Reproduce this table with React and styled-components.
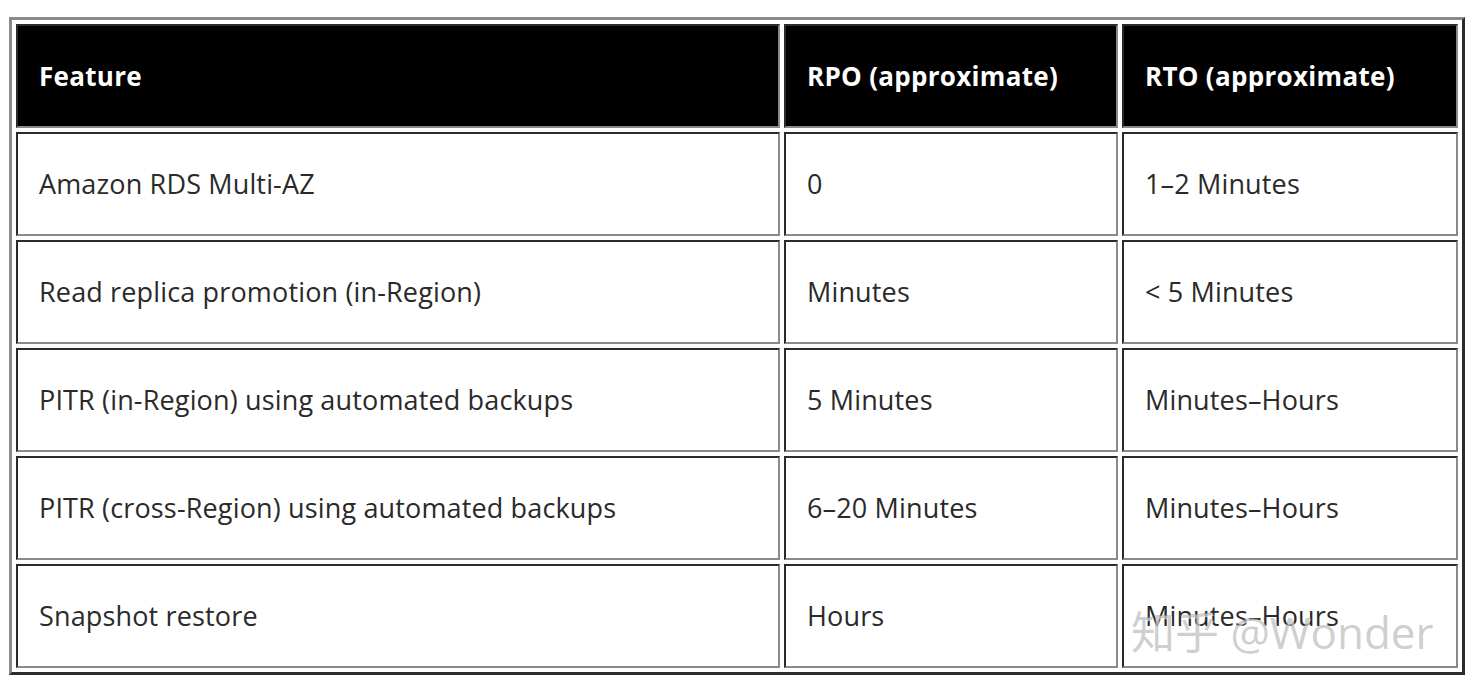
import React from "react";
import styled, { createGlobalStyle } from "styled-components";

const rows = [
  ["Amazon RDS Multi-AZ", "0", "1–2 Minutes"],
  ["Read replica promotion (in-Region)", "Minutes", "< 5 Minutes"],
  ["PITR (in-Region) using automated backups", "5 Minutes", "Minutes–Hours"],
  ["PITR (cross-Region) using automated backups", "6–20 Minutes", "Minutes–Hours"],
  ["Snapshot restore", "Hours", "Minutes–Hours"],
];

export default function App() {
  return (
    <Page>
      <GlobalStyle />
      <Frame>
        <Table>
          <colgroup>
            <col style={{ width: 764 }} />
            <col style={{ width: 334 }} />
            <col style={{ width: 336 }} />
          </colgroup>
          <thead>
            <tr>
              <HeadCell>Feature</HeadCell>
              <HeadCell>RPO (approximate)</HeadCell>
              <HeadCell>RTO (approximate)</HeadCell>
            </tr>
          </thead>
          <tbody>
            {rows.map((row, i) => (
              <tr key={i}>
                {row.map((text, j) => (
                  <Cell key={j}>{text}</Cell>
                ))}
              </tr>
            ))}
          </tbody>
        </Table>
        <Watermark>知乎 @Wonder</Watermark>
      </Frame>
    </Page>
  );
}

const GlobalStyle = createGlobalStyle`
  body {
    margin: 0;
    background: #ffffff;
    font-family: "Open Sans", "Noto Sans", sans-serif;
  }
`;

const Page = styled.div`
  padding: 17px 0 0 9px;
  background: #ffffff;
  min-height: 688px;
  box-sizing: border-box;
`;

const Frame = styled.div`
  position: relative;
  width: 1456px;
`;

const Table = styled.table`
  box-sizing: border-box;
  width: 1456px;
  table-layout: fixed;
  border-collapse: separate;
  border-spacing: 4px;
  border-style: solid;
  border-width: 3px;
  border-color: #8a8a8a #2b2b2b #2b2b2b #8a8a8a;
`;

const baseCell = `
  box-sizing: border-box;
  height: 104px;
  padding: 0 0 0 21px;
  text-align: left;
  vertical-align: middle;
  border-style: solid;
  border-width: 2px;
  border-color: #2b2b2b #8a8a8a #8a8a8a #2b2b2b;
  line-height: 34px;
  white-space: nowrap;
`;

const HeadCell = styled.th`
  ${baseCell}
  background: #000000;
  color: #ffffff;
  font-size: 26px;
  font-weight: 700;
  letter-spacing: 0.3px;
`;

const Cell = styled.td`
  ${baseCell}
  color: #2a2a2a;
  font-size: 27px;
  font-weight: 400;
  letter-spacing: 0.15px;
`;

const Watermark = styled.div`
  position: absolute;
  left: 1122px;
  top: 581px;
  font-family: "Open Sans", "Noto Sans CJK SC", sans-serif;
  font-size: 44px;
  color: rgba(160, 160, 160, 0.5);
  text-shadow: 1px 1px 0 rgba(255, 255, 255, 0.6);
  pointer-events: none;
  white-space: nowrap;
`;
